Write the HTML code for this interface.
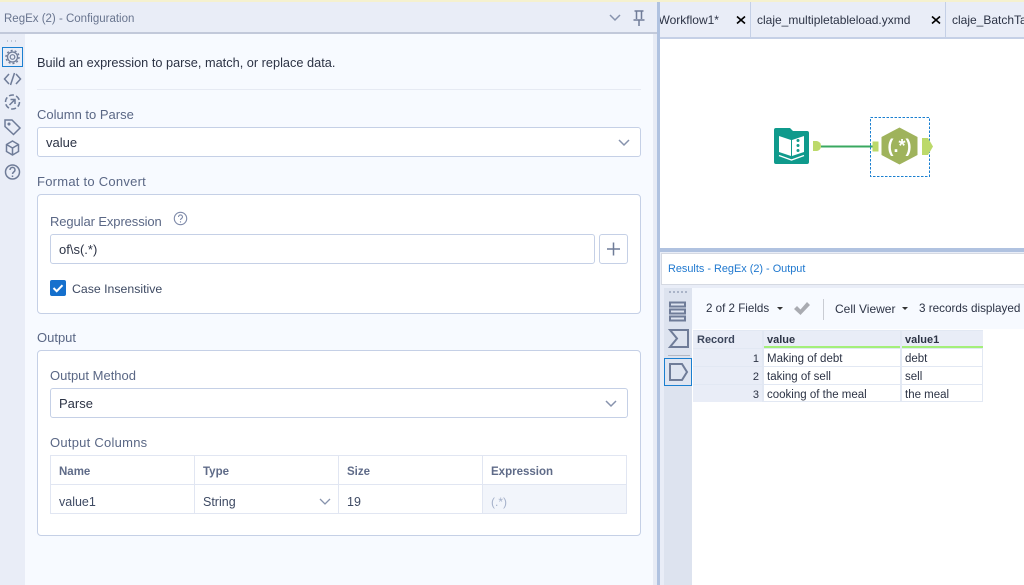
<!DOCTYPE html>
<html><head><meta charset="utf-8"><style>
html,body{margin:0;padding:0}
body{width:1024px;height:585px;overflow:hidden;position:relative;background:#fff;font-family:"Liberation Sans",sans-serif;font-size:13px;color:#2c3345}
div,span{position:absolute;box-sizing:border-box;white-space:nowrap}
svg{position:absolute;overflow:visible}
.lb{color:#5a6785;font-size:13px;font-weight:400;line-height:16px}
.in{background:#fff;border:1px solid #c5d0e6;border-radius:3px}
.card{background:#fff;border:1px solid #c5d0e6;border-radius:4px}
.t{line-height:16px}
.cell{background:#fff;font-size:11.5px;line-height:16px;padding-left:3px;padding-top:1.500px;color:#2c3345}
.hd{background:#e9edf7;font-size:11px;font-weight:bold;line-height:16px;padding-left:3px;padding-top:1px;color:#2c3345}
.num{padding-top:1.500px}
</style></head><body>
<div style="left:0;top:0;width:1024px;height:2px;background:#f5f1cf"></div>
<div style="left:0;top:2px;width:657px;height:32px;background:#e9edf7;border-bottom:2px solid #c2c9da"></div>
<div class="t" style="left:4px;top:11px;font-size:11.500px;color:#69758f">RegEx (2) - Configuration</div>
<svg style="left:0;top:0" width="657" height="34"><path d="M610 15l5 5 5-5" fill="none" stroke="#8793ad" stroke-width="1.500"/><path d="M634.500 11h9M636.500 11v8M641.500 11v8M633.500 20h11M639 20v6" fill="none" stroke="#707c98" stroke-width="1.500"/></svg>

<div style="left:0;top:34px;width:25px;height:551px;background:#e9edf7"></div>
<div style="left:25px;top:34px;width:628px;height:551px;background:#f7faff"></div>
<div style="left:653px;top:34px;width:4px;height:551px;background:#e7ebf5"></div>
<div style="left:657px;top:2px;width:3px;height:583px;background:#b0c2e0"></div>

<svg style="left:0;top:34px" width="25" height="150" fill="none" stroke="#6f7c98" stroke-width="1.500">
<path d="M7 7h1M11 7h1M15 7h1" stroke="#b0b8c8"/>
<rect x="2.500" y="13.500" width="20" height="19" stroke="#1a7fd0" stroke-width="1"/>
<circle cx="12.500" cy="23" r="2.300" stroke-width="1.200"/><circle cx="12.500" cy="23" r="5" stroke-width="1.300"/><circle cx="12.500" cy="23" r="6.500" stroke-dasharray="2 2.080" stroke-width="1.400"/>
<path d="M9 40l-4.500 5 4.500 5M16 40l4.500 5-4.500 5M14.500 39l-4 12"/>
<circle cx="12.500" cy="68" r="7" stroke-dasharray="5 2.300"/><path d="M9.500 71l5-5M10.500 65.500h4.500v4.500"/>
<path d="M5 86h7l8 8-6.500 6.500-8.500-8z"/><circle cx="9" cy="90" r=".8"/>
<path d="M12.500 107l6 3.500v7l-6 3.500-6-3.500v-7zM6.500 110.500l6 3.500 6-3.500M12.500 114v7"/>
<circle cx="12.500" cy="138" r="7"/><path d="M10 136c0-3.500 5-3.500 5 0 0 2-2.500 2-2.500 4M12.500 141.500v1.500"/>
</svg>

<div class="t" style="left:37px;top:55px;color:#2c3345;font-size:12.750px">Build an expression to parse, match, or replace data.</div>
<div style="left:37px;top:89px;width:604px;height:1px;background:#e6eaf3"></div>

<div class="lb" style="left:37px;top:107px">Column to Parse</div>
<div class="in" style="left:37px;top:127px;width:604px;height:30px"></div>
<div class="t" style="left:46px;top:135px">value</div>
<svg style="left:0;top:0" width="657" height="585" fill="none" stroke="#8793ad" stroke-width="1.500">
<path d="M619 140l5 5 5-5"/>
</svg>

<div class="lb" style="left:37px;top:174px;letter-spacing:.25px">Format to Convert</div>
<div class="card" style="left:37px;top:194px;width:604px;height:120px"></div>
<div class="lb" style="left:50px;top:214px;letter-spacing:-.1px">Regular Expression</div>
<svg style="left:173px;top:211px" width="15" height="15" fill="none" stroke="#7d89a8" stroke-width="1.100"><circle cx="7.500" cy="7.500" r="6.200"/><path d="M5.500 6c0-2.700 4-2.700 4 0 0 1.500-2 1.500-2 3M7.500 10.300v1.200"/></svg>
<div class="in" style="left:50px;top:234px;width:545px;height:30px"></div>
<div class="t" style="left:59px;top:242px">of\s(.*)</div>
<div class="in" style="left:599px;top:234px;width:29px;height:30px"></div>
<svg style="left:599px;top:234px" width="29" height="30" fill="none" stroke="#6f7c98" stroke-width="1.500"><path d="M14.500 8.500v13M8 15h13"/></svg>
<div style="left:50px;top:280px;width:16px;height:16px;background:#1570cd;border-radius:2px"></div>
<svg style="left:50px;top:280px" width="16" height="16" fill="none" stroke="#fff" stroke-width="2"><path d="M3.500 8l3.200 3.200 5.800-6"/></svg>
<div class="t" style="left:72px;top:281px;color:#3e4a63;font-size:12.300px">Case Insensitive</div>

<div class="lb" style="left:37px;top:330px">Output</div>
<div class="card" style="left:37px;top:350px;width:604px;height:186px"></div>
<div class="lb" style="left:50px;top:368px">Output Method</div>
<div class="in" style="left:50px;top:388px;width:578px;height:30px"></div>
<div class="t" style="left:59px;top:396px;z-index:1">Parse</div>
<svg style="left:0;top:0;z-index:1" width="657" height="585" fill="none" stroke="#8793ad" stroke-width="1.500"><path d="M606 401l5 5 5-5"/></svg>
<div class="lb" style="left:50px;top:435px;letter-spacing:.25px">Output Columns</div>

<div style="left:50px;top:455px;width:577px;height:59px;border:1px solid #e1e6f2;background:#fff"></div>
<div style="left:51px;top:484px;width:575px;height:1px;background:#e1e6f2"></div>
<div style="left:483px;top:485px;width:143px;height:28px;background:#f2f5fb"></div>
<div style="left:194px;top:456px;width:1px;height:57px;background:#e1e6f2"></div>
<div style="left:338px;top:456px;width:1px;height:57px;background:#e1e6f2"></div>
<div style="left:482px;top:456px;width:1px;height:57px;background:#e1e6f2"></div>
<div class="t" style="left:59px;top:464px;font-size:11.500px;font-weight:bold;color:#5f6b88">Name</div>
<div class="t" style="left:203px;top:464px;font-size:11.500px;font-weight:bold;color:#5f6b88">Type</div>
<div class="t" style="left:347px;top:464px;font-size:11.500px;font-weight:bold;color:#5f6b88">Size</div>
<div class="t" style="left:491px;top:464px;font-size:11.500px;font-weight:bold;color:#5f6b88">Expression</div>
<div class="t" style="left:59px;top:494px;font-size:12.500px;color:#3e4a63">value1</div>
<div class="t" style="left:203px;top:494px;font-size:12.500px;color:#3e4a63">String</div>
<svg style="left:0;top:0" width="657" height="585" fill="none" stroke="#8793ad" stroke-width="1.300"><path d="M320 499l5 5 5-5"/></svg>
<div class="t" style="left:347px;top:494px;font-size:12.500px;color:#3e4a63">19</div>
<div class="t" style="left:491px;top:494px;font-size:12px;color:#a5b1ca">(.*)</div>

<!-- tabs -->
<div style="left:660px;top:2px;width:364px;height:37px;background:#e9edf7;border-bottom:2px solid #c5d0e6"></div>
<div style="left:750px;top:2px;width:1px;height:36px;background:#c5d0e6"></div>
<div style="left:945px;top:2px;width:1px;height:36px;background:#c5d0e6"></div>
<div style="left:660px;top:12px;width:90px;height:18px;overflow:hidden"><span class="t" style="left:-1.500px;top:0;font-size:12px;color:#2c3345">Workflow1*</span></div>
<div class="t" style="left:757px;top:12px;font-size:12px;color:#2c3345">claje_multipletableload.yxmd</div>
<div style="left:952px;top:12px;width:72px;height:18px;overflow:hidden"><span class="t" style="left:0;top:0;font-size:12px;color:#2c3345">claje_BatchTable</span></div>
<svg style="left:0;top:0" width="1024" height="40" fill="none" stroke="#000" stroke-width="1.600"><path d="M737 16.500l8 7M745 16.500l-8 7M932 16.500l8 7M940 16.500l-8 7"/></svg>

<!-- canvas -->
<svg style="left:760px;top:105px" width="190" height="80">
<path d="M14 25q0-2 2-2h14l3 3h14q2 0 2 2v29q0 2-2 2H16q-2 0-2-2z" fill="#0f9a8c"/>
<path d="M19 31l12 4v16l-12-4z" fill="#fff"/>
<path d="M44 31l-12 4v16l12-4z" fill="#fff"/>
<circle cx="38" cy="35.500" r="1.500" fill="#0f9a8c"/><circle cx="38" cy="40.500" r="1.500" fill="#0f9a8c"/><circle cx="38" cy="45.500" r="1.500" fill="#0f9a8c"/>
<path d="M19 50.500l12.500 4.500 12.500-4.500" stroke="#fff" stroke-width="1.300" fill="none"/>
<path d="M53 36h4q4 1 4 5t-4 5h-4z" fill="#bcd96a"/>
<path d="M61 41.500h52" stroke="#3aa860" stroke-width="2"/>
<rect x="112.500" y="36.500" width="6" height="10" fill="#bcd96a"/>
<rect x="110.500" y="12.500" width="59" height="59" fill="none" stroke="#1a7fd0" stroke-width="1" stroke-dasharray="2.500 1.500"/>
<path d="M139.500 22.500l18 9.500v18l-18 9.500-18-9.500v-18z" fill="#9fb35c"/>
<text x="139.500" y="47" text-anchor="middle" font-family="Liberation Sans" font-weight="bold" font-size="18" fill="#fff">(.*)</text>
<path d="M162 33h6l5 8.500-5 8.500h-6z" fill="#bcd96a"/>
</svg>

<!-- results -->
<div style="left:660px;top:248px;width:364px;height:4px;background:#b0c2e0"></div>
<div style="left:660px;top:252px;width:364px;height:333px;background:#e9edf7"></div>
<div style="left:661px;top:253px;width:363px;height:32px;background:#fff;border:1px solid #d5d9e2;border-right:0"></div>
<div class="t" style="left:668px;top:261px;font-size:10.900px;color:#1f78cf">Results - RegEx (2) - Output</div>
<div style="left:664px;top:288px;width:28px;height:297px;background:#dde3ef"></div>
<div style="left:692px;top:288px;width:332px;height:297px;background:#fff"></div>
<div style="left:692px;top:288px;width:332px;height:41px;background:#f7faff"></div>
<svg style="left:664px;top:288px" width="30" height="110" fill="none" stroke="#6f7c98" stroke-width="2">
<path d="M5 4h2M9 4h2M13 4h2M17 4h2M21 4h2" stroke="#9aa5bb" stroke-width="1.500"/>
<rect x="6" y="14.500" width="15" height="4"/><rect x="6" y="21.500" width="15" height="4"/><rect x="6" y="28.500" width="15" height="4"/>
<path d="M6 42H24V59H6L13 50.500z"/>
<path d="M4 67.500h22" stroke="#b3b8c4" stroke-width="1"/>
<rect x=".5" y="70.500" width="27" height="27" fill="#dfe5f1" stroke="#1a7fd0" stroke-width="1"/>
<path d="M6 76h12l5 8-5 8H6z"/>
</svg>
<div class="t" style="left:706px;top:301px;font-size:11.600px;color:#2c3345">2 of 2 Fields</div>
<svg style="left:692px;top:288px" width="332" height="40">
<path d="M85 19h6l-3 3zM210 19h6l-3 3z" fill="#333"/>
<path d="M102 21l3-3 3.500 3.500L115 14l3 3-9.500 10z" fill="#a9abb1"/>
<path d="M131.500 11v21" stroke="#c9ccd3" stroke-width="1"/>
</svg>
<div class="t" style="left:835px;top:301px;font-size:12px;color:#2c3345">Cell Viewer</div>
<div class="t" style="left:919px;top:301px;font-size:11.700px;color:#2c3345">3 records displayed</div>

<div style="left:693px;top:330px;width:290px;height:72px;background:#e2e8f3"></div>
<div class="hd" style="left:693px;top:331px;width:69px;height:17px;color:#3c465c;padding-left:4px">Record</div>
<div class="hd" style="left:764px;top:331px;width:136px;height:17px;border-bottom:2px solid #a4ef7a">value</div>
<div class="hd" style="left:902px;top:331px;width:81px;height:17px;border-bottom:2px solid #a4ef7a">value1</div>
<div class="hd num" style="left:693px;top:349px;width:69px;height:17px;font-weight:400;text-align:right;padding-right:3px">1</div>
<div class="hd num" style="left:693px;top:367px;width:69px;height:17px;font-weight:400;text-align:right;padding-right:3px">2</div>
<div class="hd num" style="left:693px;top:385px;width:69px;height:17px;font-weight:400;text-align:right;padding-right:3px">3</div>
<div class="cell" style="left:764px;top:349px;width:136px;height:17px">Making of debt</div>
<div class="cell" style="left:902px;top:349px;width:80px;height:17px">debt</div>
<div class="cell" style="left:764px;top:367px;width:136px;height:17px">taking of sell</div>
<div class="cell" style="left:902px;top:367px;width:80px;height:17px">sell</div>
<div class="cell" style="left:764px;top:385px;width:136px;height:16px">cooking of the meal</div>
<div class="cell" style="left:902px;top:385px;width:80px;height:16px">the meal</div>
</body></html>
